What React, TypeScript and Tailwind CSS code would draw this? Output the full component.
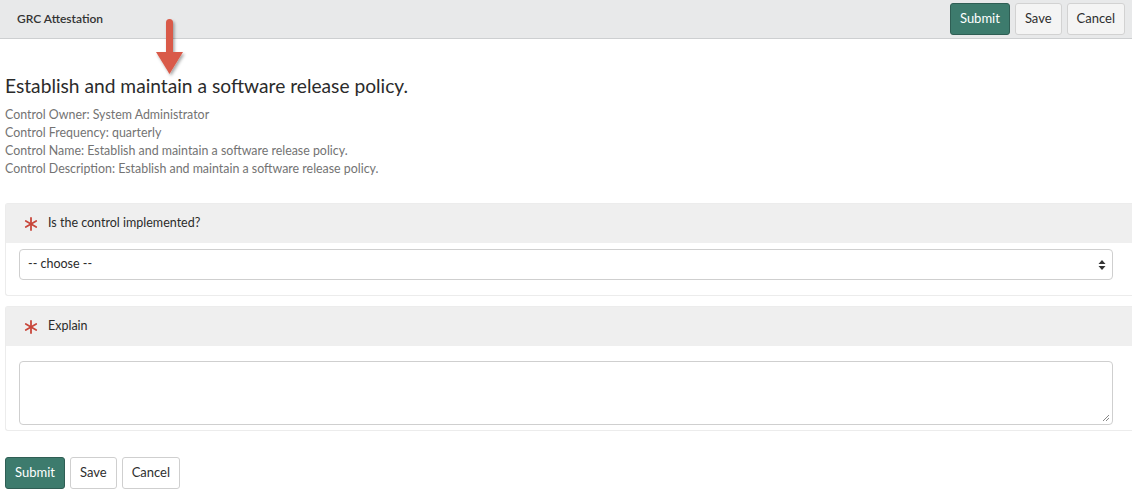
import React from "react";

function Star() {
  return (
    <svg width="14" height="14" viewBox="0 0 14 14" className="shrink-0">
      <g stroke="#c8463a" strokeWidth="1.8" strokeLinecap="round">
        <line x1="7" y1="1" x2="7" y2="13" />
        <line x1="1.8" y1="4" x2="12.2" y2="10" />
        <line x1="1.8" y1="10" x2="12.2" y2="4" />
      </g>
    </svg>
  );
}

function Arrow() {
  return (
    <svg width="40" height="64" viewBox="0 0 40 64" className="absolute left-[150px] top-[16px]">
      <defs>
        <filter id="sh" x="-50%" y="-50%" width="200%" height="200%">
          <feDropShadow dx="1.5" dy="2" stdDeviation="1.5" floodColor="#000" floodOpacity="0.35" />
        </filter>
      </defs>
      <g filter="url(#sh)" fill="#d95a48">
        <rect x="16" y="3" width="7" height="36" rx="3.5" />
        <path d="M6 36 L33 36 L19.5 58 Z" />
      </g>
    </svg>
  );
}

function Btn({ children, primary, muted }: { children: React.ReactNode; primary?: boolean; muted?: boolean }) {
  if (primary)
    return (
      <button className="h-8 px-[9px] rounded-[3px] border border-[#2f5e54] bg-[#3d7b6d] text-white text-[13px]">
        {children}
      </button>
    );
  return (
    <button
      className={
        muted
          ? "h-8 px-[9px] rounded-[3px] border border-[#d2d2d2] bg-[#f4f4f4] text-[#2e2e2e] text-[13px]"
          : "h-8 px-[9px] rounded-[3px] border border-[#cfcfcf] bg-white text-[#2e2e2e] text-[13px]"
      }
    >
      {children}
    </button>
  );
}

export default function App() {
  return (
    <div className="relative w-[1132px] h-[497px] bg-white overflow-hidden font-['Lato',sans-serif] text-[#2e2e2e]">
      <div className="h-[39px] flex items-center justify-between bg-[#e8e9ea] border-b border-[#cdcfd1] pl-[17px] pr-[7px]">
        <span className="text-[12px] font-semibold text-[#333]">GRC Attestation</span>
        <div className="flex gap-[5px]">
          <Btn primary>Submit</Btn>
          <Btn muted>Save</Btn>
          <Btn muted>Cancel</Btn>
        </div>
      </div>
      <Arrow />
      <div className="pl-[5px]">
        <h1 className="mt-[33px] text-[19.2px] leading-[28px] text-[#2b2b2b]">
          Establish and maintain a software release policy.
        </h1>
        <div className="mt-[6px] text-[12.4px] leading-[18px] text-[#737373]">
          <div>Control Owner: System Administrator</div>
          <div>Control Frequency: quarterly</div>
          <div>Control Name: Establish and maintain a software release policy.</div>
          <div>Control Description: Establish and maintain a software release policy.</div>
        </div>

        <div className="mt-[25px] border border-r-0 border-[#ececec] rounded-l-[3px]">
          <div className="h-[39px] bg-[#efefef] flex items-center gap-[10px] pl-[18px]">
            <Star />
            <span className="text-[12.5px] text-[#2b2b2b]">Is the control implemented?</span>
          </div>
          <div className="pl-[13px] pr-[19px] pt-[6px] pb-[15px]">
            <div className="h-[31px] border border-[#cfcfcf] rounded-[4px] flex items-center justify-between pl-[8px] pr-[6px]">
              <span className="text-[12.5px] text-[#2b2b2b]">-- choose --</span>
              <svg width="8" height="14" viewBox="0 0 8 14">
                <path d="M4 2 L7.5 6 L0.5 6 Z M4 12 L7.5 8 L0.5 8 Z" fill="#333" />
              </svg>
            </div>
          </div>
        </div>

        <div className="mt-[10px] border border-r-0 border-[#ececec] rounded-l-[3px]">
          <div className="h-[39px] bg-[#efefef] flex items-center gap-[10px] pl-[18px]">
            <Star />
            <span className="text-[12.5px] text-[#2b2b2b]">Explain</span>
          </div>
          <div className="pl-[13px] pr-[19px] pt-[15px] pb-[5px]">
            <div className="relative h-[64px] border border-[#cfcfcf] rounded-[4px]">
              <svg width="8" height="8" viewBox="0 0 8 8" className="absolute right-[2px] bottom-[2px]">
                <path d="M7 1 L1 7 M7 4 L4 7" stroke="#888" strokeWidth="1" />
              </svg>
            </div>
          </div>
        </div>

        <div className="mt-[26px] flex gap-[5px]">
          <Btn primary>Submit</Btn>
          <Btn>Save</Btn>
          <Btn>Cancel</Btn>
        </div>
      </div>
    </div>
  );
}
